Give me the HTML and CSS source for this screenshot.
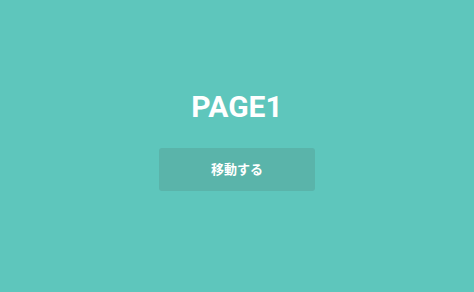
FILE: index.html
```html
<!DOCTYPE html>
<html lang="ja">
<head>
<meta charset="utf-8">
<link rel="stylesheet" href="styles.css">
</head>
<body>
<main class="page">
  <h1 class="title">PAGE1</h1>
  <button class="move-btn">移動する</button>
</main>
</body>
</html>
```
FILE: styles.css
```css
html, body {
  margin: 0;
  padding: 0;
}
body {
  background: #5ec6bc;
  font-family: "Roboto", "Noto Sans CJK JP", sans-serif;
}
.page {
  height: 292px;
  box-sizing: border-box;
  padding-top: 89px;
  display: flex;
  flex-direction: column;
  align-items: center;
}
.title {
  margin: 0;
  font-size: 30px;
  line-height: 36px;
  font-weight: 700;
  color: #ffffff;
  letter-spacing: 0;
}
.move-btn {
  margin-top: 23px;
  width: 156px;
  height: 43px;
  border: none;
  border-radius: 3px;
  background: #5ab4aa;
  color: #ffffff;
  font-family: "Noto Sans CJK JP", sans-serif;
  font-weight: 700;
  font-size: 13px;
  padding: 0 0 3px 0;
}
```
